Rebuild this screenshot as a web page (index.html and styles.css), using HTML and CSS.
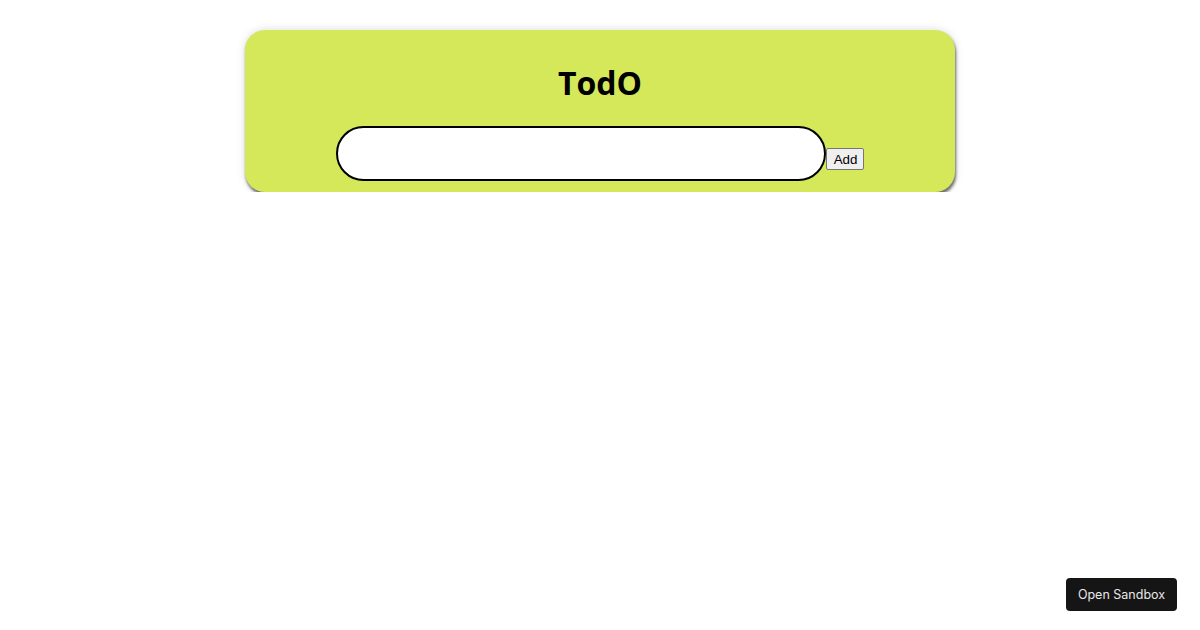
FILE: index.html
```html
<!DOCTYPE html>
<html lang="en">
<head>
<meta charset="utf-8">
<title>TodO</title>
<link rel="stylesheet" href="styles.css">
</head>
<body>
<main class="page">
  <section class="card">
    <h1 class="title">TodO</h1>
    <form class="add-row">
      <input class="task-input" type="text" aria-label="New task">
      <button class="add-btn" type="button">Add</button>
    </form>
  </section>
</main>
<a class="sandbox-btn" href="#">Open Sandbox</a>
</body>
</html>
```

FILE: styles.css
```css
html, body {
  margin: 0;
  padding: 0;
  background: #ffffff;
}

.page {
  padding-top: 30px;
  display: flex;
  justify-content: center;
}

.card {
  width: 710px;
  box-sizing: border-box;
  background: #d4e85a;
  border-radius: 20px;
  padding: 31px 0 11px;
  box-shadow: 1px 3px 3px rgba(0, 0, 0, 0.55), 0 0 8px rgba(0, 0, 0, 0.15);
}

.title {
  margin: 0 0 21px;
  text-align: center;
  font-family: "Open Sans", "Noto Sans", sans-serif;
  font-weight: 700;
  font-size: 32px;
  line-height: 44px;
  color: #000;
}

.add-row {
  display: flex;
  justify-content: center;
  align-items: flex-end;
  margin: 0;
}

.task-input {
  width: 490px;
  height: 55px;
  box-sizing: border-box;
  border: 2px solid #000;
  border-radius: 28px;
  background: #fff;
  padding: 0 20px;
  font-size: 16px;
  outline: none;
}

.add-btn {
  margin: 0 0 11px;
  height: 22px;
  padding: 1px 6px 1px 7px;
  font-family: "Liberation Sans", Arial, sans-serif;
  font-size: 13.33px;
  color: #000;
  background: #efefef;
  border: 1px solid #767676;
  border-radius: 2px;
}

.sandbox-btn {
  position: fixed;
  right: 23px;
  bottom: 19px;
  width: 111px;
  height: 33px;
  box-sizing: border-box;
  display: flex;
  align-items: center;
  justify-content: center;
  background: #151515;
  color: #e8e8e8;
  border-radius: 4px;
  font-family: Inter, "Liberation Sans", sans-serif;
  font-size: 12.5px;
  text-decoration: none;
}
```
